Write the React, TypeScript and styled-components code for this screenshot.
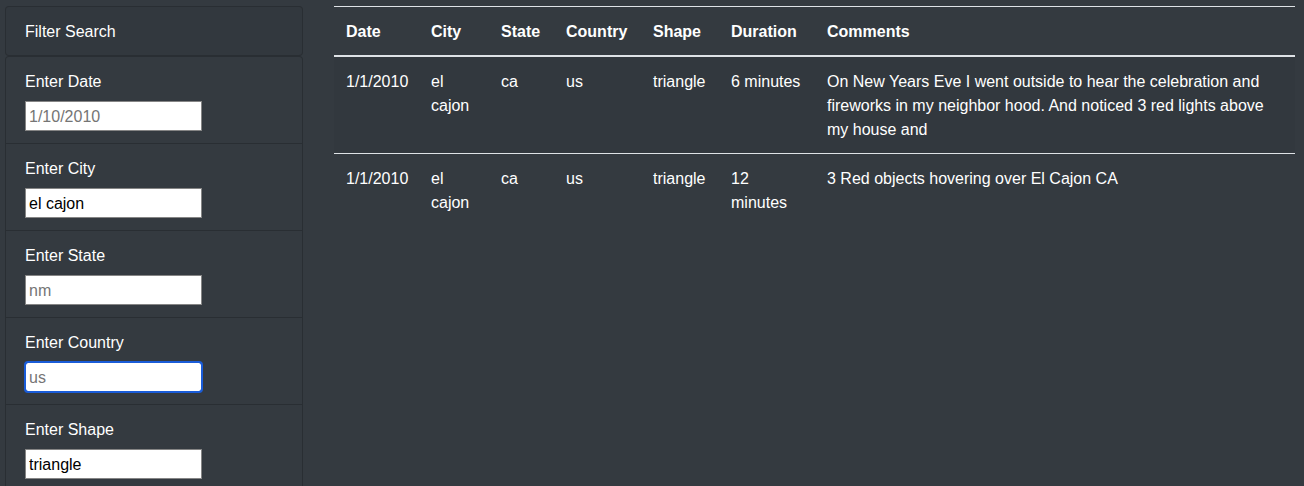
import React from "react";
import styled, { createGlobalStyle } from "styled-components";

const Global = createGlobalStyle`
  html, body { margin: 0; padding: 0; background: #343a40; }
  body {
    font-family: "Liberation Sans", Arial, sans-serif;
    font-size: 16px;
    line-height: 1.5;
    color: #fff;
    width: 1304px;
    height: 486px;
    overflow: hidden;
  }
`;

const Page = styled.div`
  display: flex;
  align-items: flex-start;
  padding: 6px 9px 0 5px;
  gap: 31px;
  background: #343a40;
  height: 486px;
  box-sizing: border-box;
`;

const Sidebar = styled.aside`
  width: 298px;
  flex: none;
  display: flex;
  flex-direction: column;
  gap: 0;
`;

const Card = styled.div`
  background: #343a40;
  border: 1px solid rgba(0, 0, 0, 0.2);
  border-radius: 4px;
  overflow: hidden;
`;

const CardHeader = styled.div`
  padding: 13px 19px 11px;
  background: rgba(0, 0, 0, 0.03);
  line-height: 24px;
`;

const Item = styled.div`
  padding: 13px 19px 12px;
  border-top: 1px solid rgba(0, 0, 0, 0.2);
  &:first-child { border-top: none; }
`;

const Label = styled.label`
  display: block;
  line-height: 24px;
  margin-bottom: 7px;
`;

const Input = styled.input<{ $focused?: boolean }>`
  display: block;
  box-sizing: border-box;
  width: 177px;
  height: 30px;
  padding: 2px 3px 0;
  font-family: "Liberation Sans", Arial, sans-serif;
  font-size: 16px;
  color: #000;
  background: #fff;
  border: 1px solid #858585;
  border-radius: 0;
  outline: ${(p) => (p.$focused ? "2px solid #1a5cd8" : "none")};
  outline-offset: -1px;
  ${(p) => (p.$focused ? "border-radius: 3px; border-color: #1a5cd8;" : "")}
  &::placeholder { color: #757575; }
`;

const Main = styled.main`
  flex: 1;
`;

const Table = styled.table`
  width: 961px;
  border-collapse: collapse;
  table-layout: fixed;
  color: #fff;
  border-top: 1px solid #dee2e6;
`;

const Th = styled.th<{ $w: number }>`
  box-sizing: border-box;
  width: ${(p) => p.$w}px;
  text-align: left;
  font-weight: bold;
  padding: 13px 12px 11px;
  line-height: 24px;
  border-bottom: 2px solid #dee2e6;
  vertical-align: bottom;
`;

const Tr = styled.tr<{ $striped?: boolean }>`
  background: ${(p) => (p.$striped ? "rgba(0,0,0,0.03)" : "transparent")};
  border-top: 1px solid #dee2e6;
  &:first-child { border-top: none; }
`;

const Td = styled.td`
  box-sizing: border-box;
  padding: 13px 12px 11px;
  line-height: 24px;
  vertical-align: top;
`;

const cols = [
  { name: "Date", w: 85 },
  { name: "City", w: 70 },
  { name: "State", w: 65 },
  { name: "Country", w: 87 },
  { name: "Shape", w: 78 },
  { name: "Duration", w: 96 },
  { name: "Comments", w: 480 },
];

const rows = [
  ["1/1/2010", "el cajon", "ca", "us", "triangle", "6 minutes",
    "On New Years Eve I went outside to hear the celebration and fireworks in my neighbor hood. And noticed 3 red lights above my house and"],
  ["1/1/2010", "el cajon", "ca", "us", "triangle", "12 minutes",
    "3 Red objects hovering over El Cajon CA"],
];

const filters = [
  { label: "Enter Date", placeholder: "1/10/2010" },
  { label: "Enter City", value: "el cajon" },
  { label: "Enter State", placeholder: "nm" },
  { label: "Enter Country", placeholder: "us", focused: true },
  { label: "Enter Shape", value: "triangle" },
];

export default function App() {
  return (
    <>
      <Global />
      <Page>
        <Sidebar>
          <Card>
            <CardHeader>Filter Search</CardHeader>
          </Card>
          <Card>
            {filters.map((f) => (
              <Item key={f.label}>
                <Label>{f.label}</Label>
                <Input
                  type="text"
                  placeholder={f.placeholder}
                  defaultValue={f.value}
                  $focused={f.focused}
                />
              </Item>
            ))}
          </Card>
        </Sidebar>
        <Main>
          <Table>
            <thead>
              <tr>
                {cols.map((c) => (
                  <Th key={c.name} $w={c.w}>{c.name}</Th>
                ))}
              </tr>
            </thead>
            <tbody>
              {rows.map((r, i) => (
                <Tr key={i} $striped={i % 2 === 0}>
                  {r.map((cell, j) => (
                    <Td key={j}>{cell}</Td>
                  ))}
                </Tr>
              ))}
            </tbody>
          </Table>
        </Main>
      </Page>
    </>
  );
}
